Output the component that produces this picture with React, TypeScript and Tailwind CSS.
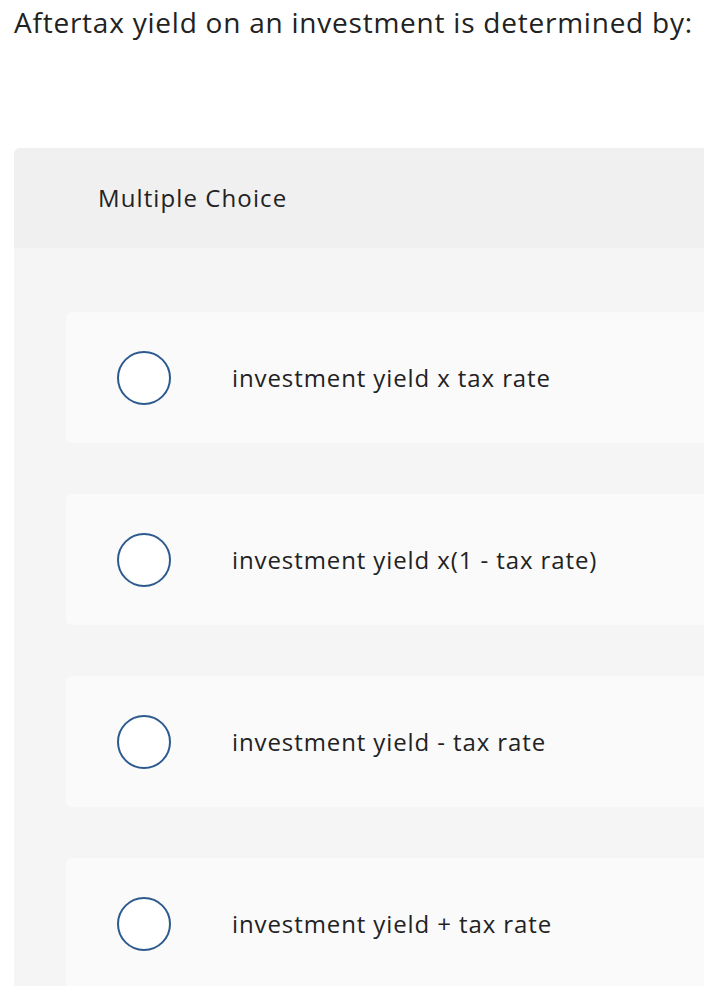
const options = [
  "investment yield x tax rate",
  "investment yield x(1 - tax rate)",
  "investment yield - tax rate",
  "investment yield + tax rate",
];

export default function App() {
  return (
    <div className="h-[986px] w-[704px] overflow-hidden bg-white font-['Open_Sans',sans-serif] text-[#222]">
      <h1 className="pl-[14px] pt-[4px] text-[28px] leading-[36px] tracking-[0.77px] text-[#222]">
        Aftertax yield on an investment is determined by:
      </h1>
      <div className="ml-[14px] mt-[108px] rounded-tl-[6px] bg-[#f5f5f5]">
        <div className="flex h-[100px] items-center rounded-tl-[6px] bg-[#f0f0f0] pl-[84px] text-[24px] tracking-[1.1px] text-[#222]">
          Multiple Choice
        </div>
        <div className="flex flex-col gap-[51px] pl-[52px] pt-[64px] pb-[40px]">
          {options.map((o) => (
            <div key={o} className="flex h-[131px] items-center rounded-l-[6px] bg-[#fafafa] pl-[51px]">
              <span className="h-[54px] w-[54px] shrink-0 rounded-full border-2 border-[#2c5a8f] bg-white" />
              <span className="ml-[61px] text-[24px] tracking-[0.9px] text-[#222]">{o}</span>
            </div>
          ))}
        </div>
      </div>
    </div>
  );
}
